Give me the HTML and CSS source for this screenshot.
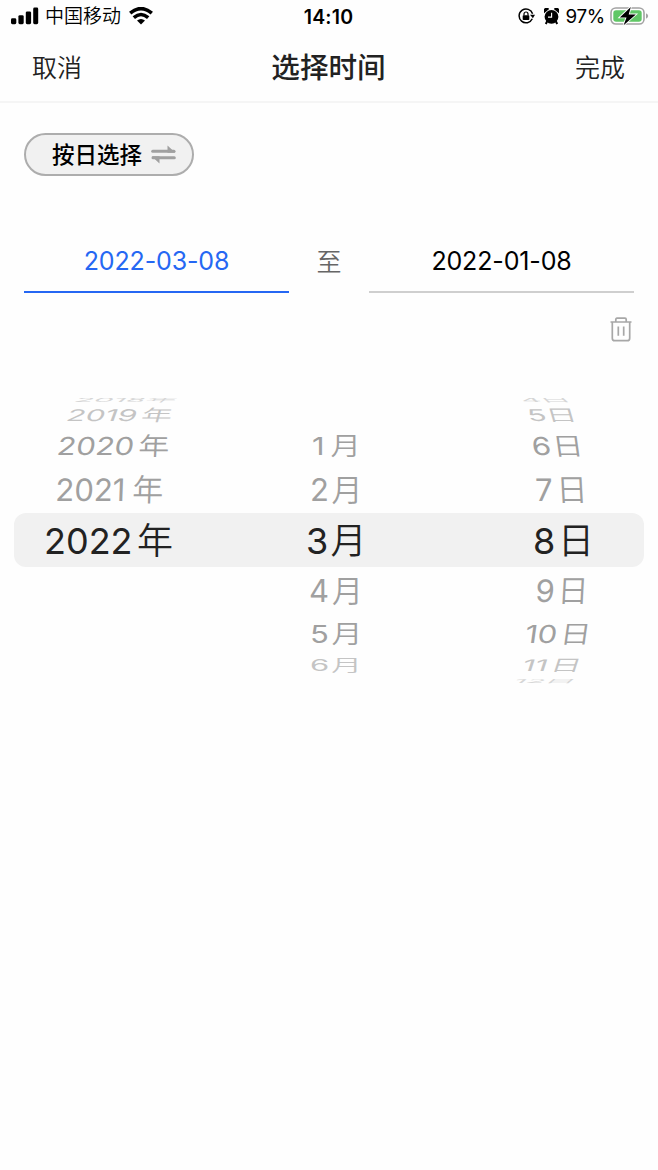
FILE: index.html
```html
<!DOCTYPE html>
<html lang="zh-CN">
<head>
<meta charset="utf-8">
<title>选择时间</title>
<link rel="stylesheet" href="styles.css">
</head>
<body>
<div class="status">
  <div class="status-left">
    <svg class="signal" width="28" height="18" viewBox="0 0 28 18"><rect x="0" y="11.3" width="5.3" height="5.9" rx="1.4"/><rect x="7.4" y="8.2" width="5.3" height="9" rx="1.4"/><rect x="14.8" y="4.4" width="5.3" height="12.8" rx="1.4"/><rect x="22.2" y="0.5" width="5" height="16.7" rx="1.4"/></svg>
    <span class="carrier">中国移动</span>
    <svg class="wifi" width="24" height="18" viewBox="0 0 24 18"><g fill="none" stroke="#000" stroke-width="3.6"><path d="M1.2 6.2Q12-3 22.8 6.2"/><path d="M4.8 10.6Q12 4.4 19.2 10.6"/></g><path d="M8 13.5Q12 10.4 16 13.5L12 17.5Z"/></svg>
  </div>
  <div class="clock">14:10</div>
  <div class="status-right">
    <svg class="lock" width="17" height="17" viewBox="0 0 17 17"><path d="M14.3 10.8A6.9 6.9 0 1 1 14.6 5.8" fill="none" stroke="#000" stroke-width="1.5"/><path d="M12 6.8h5l-2.1 3.5z"/><rect x="4.7" y="7.2" width="6.6" height="4.8" rx=".8"/><path d="M6 7.5V6a2 2 0 0 1 4 0v1.5" fill="none" stroke="#000" stroke-width="1.2"/></svg>
    <svg class="alarm" width="15" height="17" viewBox="0 0 15 17"><circle cx="7.5" cy="8.8" r="6.9"/><path d="M.1 5.2A3.1 3.1 0 0 1 5.2.9ZM14.9 5.2A3.1 3.1 0 0 0 9.8.9Z"/><path d="M3.3 13 1.8 16M11.7 13l1.5 3" stroke="#000" stroke-width="2"/><path d="M7.6 4.8v4.3H4" fill="none" stroke="#fff" stroke-width="1.1"/></svg>
    <span class="percent">97%</span>
    <svg class="battery" width="39" height="20" viewBox="0 0 39 20"><rect x="1" y="2" width="33" height="16" rx="4.8" fill="#fff" stroke="#a3a3a3" stroke-width="1.6"/><rect x="3.3" y="4.2" width="28.4" height="11.6" rx="2.8" fill="#60c766"/><path d="M36 7.2q2.2 1 2.2 2.8T36 12.8Z" fill="#a3a3a3"/><path d="M20.8 1 9.8 11.4h6.7L13.6 19.2 25.8 8.4H18.7Z" fill="#000" stroke="#fff" stroke-width="1.8" paint-order="stroke"/></svg>
  </div>
</div>
<header class="nav">
  <span class="nav-action">取消</span>
  <h1 class="nav-title">选择时间</h1>
  <span class="nav-action nav-done">完成</span>
</header>
<main>
  <button class="mode">
    <span>按日选择</span>
    <svg width="25" height="21" viewBox="0 0 25 21"><g fill="none" stroke="#a0a0a0" stroke-width="3" stroke-linecap="round"><path d="M1.7 7.2H23"/><path d="M2 13.8H23.3"/></g><path d="M16.5 1.4 24.3 8.7H16.5ZM8.5 19.6.7 12.3H8.5Z" fill="#a0a0a0"/></svg>
  </button>
  <section class="range">
    <div class="date date-active">2022-03-08</div>
    <div class="to">至</div>
    <div class="date">2022-01-08</div>
  </section>
  <div class="tools">
    <svg width="22" height="25" viewBox="0 0 22 25" fill="none" stroke="#a7a7a7" stroke-width="1.7"><path d="M.5 5H21.5M5.8 5V2.4Q5.8 1.2 7 1.2H15Q16.2 1.2 16.2 2.4V5M2.3 5V21.2Q2.3 23.7 4.8 23.7H17.2Q19.7 23.7 19.7 21.2V5M8.3 9.5V18.7M13.7 9.5V18.7"/></svg>
  </div>
  <section class="picker">
    <div class="selection"></div>
    <svg class="wheel" width="220" height="286">
      <g class="far"><text transform="translate(73 4) skewX(-50) scale(1 .19)">2018</text><text class="unit" transform="translate(144 4) skewX(-50) scale(1 .19)">年</text></g>
      <g class="faint"><text transform="translate(65 23) skewX(-20) scale(1 .52)">2019</text><text class="unit" transform="translate(140 22.5) skewX(-15) scale(1 .52)">年</text></g>
      <g><text transform="translate(56 57) skewX(-9) scale(1 .8)">2020</text><text class="unit" transform="translate(138 56.5) skewX(-3) scale(1 .8)">年</text></g>
      <g><text transform="translate(55 103) skewX(-2)">2021</text><text class="unit" transform="translate(132 103) skewX(-2)">年</text></g>
      <g class="current"><text x="44" y="156">2022</text><text class="unit" x="137" y="156">年</text></g>
    </svg>
    <svg class="wheel" width="219" height="286">
      <g><text transform="translate(92 57) scale(1 .8)">1</text><text class="unit" transform="translate(110.5 56.5) scale(.98 .8)">月</text></g>
      <g><text transform="translate(90 103)">2</text><text class="unit" transform="translate(111.5 102.5)">月</text></g>
      <g class="current"><text x="86" y="156">3</text><text class="unit" x="110.5" y="155.5">月</text></g>
      <g><text transform="translate(89 204)">4</text><text class="unit" transform="translate(112 204)">月</text></g>
      <g><text transform="translate(90 245) scale(1 .8)">5</text><text class="unit" transform="translate(111.5 245) scale(1 .8)">月</text></g>
      <g class="faint"><text transform="translate(90 273) scale(1 .51)">6</text><text class="unit" transform="translate(111 273) scale(1 .51)">月</text></g>
    </svg>
    <svg class="wheel" width="219" height="286">
      <g class="far"><text transform="translate(84 4) skewX(48) scale(1 .19)">4</text><text class="unit" transform="translate(103 4) skewX(48) scale(1 .19)">日</text></g>
      <g class="faint"><text transform="translate(90 23) skewX(16) scale(1 .52)">5</text><text class="unit" transform="translate(108.5 22.5) skewX(16) scale(1 .52)">日</text></g>
      <g><text transform="translate(94 57) skewX(8) scale(1 .8)">6</text><text class="unit" transform="translate(114.5 56.5) skewX(8) scale(1 .8)">日</text></g>
      <g><text transform="translate(97 103) skewX(3)">7</text><text class="unit" transform="translate(118 102.5) skewX(3)">日</text></g>
      <g class="current"><text x="94" y="156">8</text><text class="unit" x="119" y="155.5">日</text></g>
      <g><text transform="translate(96 204) skewX(-3)">9</text><text class="unit" transform="translate(118 204) skewX(-3)">日</text></g>
      <g><text transform="translate(85 245) skewX(-8) scale(1 .8)">10</text><text class="unit" transform="translate(120 245) skewX(-8) scale(1 .8)">日</text></g>
      <g class="faint"><text transform="translate(82 273) skewX(-18) scale(1 .51)">11</text><text class="unit" transform="translate(110 273) skewX(-18) scale(1 .51)">日</text></g>
      <g class="far"><text transform="translate(73 285) skewX(-50) scale(1 .17)">12</text><text class="unit" transform="translate(104 285) skewX(-50) scale(1 .17)">日</text></g>
    </svg>
  </section>
</main>
</body>
</html>
```
FILE: styles.css
```css
* { box-sizing: border-box; }
body {
  margin: 0;
  min-height: 1170px;
  background: #fefefe;
  color: #222;
  font-family: Inter, "Noto Sans CJK SC", sans-serif;
}
svg { display: block; flex: none; }
.status {
  display: grid;
  grid-template-columns: 1fr auto 1fr;
  align-items: center;
  height: 34px;
  padding: 0 9px 2px 11px;
  color: #000;
}
.status-left, .status-right { display: flex; align-items: center; height: 32px; }
.status-right { justify-content: flex-end; }
.carrier { margin: 2px 8px 0 6px; font-size: 19px; line-height: 32px; font-weight: 350; }
.clock { margin-left: -3px; padding-top: 1px; font-size: 19.5px; font-weight: 600; letter-spacing: .2px; }
.lock { margin-top: 1px; }
.alarm { margin-left: 9px; }
.percent { margin: 1px 5px 0 7px; font-size: 18.8px; letter-spacing: -.3px; }
.nav {
  display: grid;
  grid-template-columns: 1fr auto 1fr;
  align-items: center;
  height: 69px;
  padding: 0 33px 0 32px;
  border-bottom: 2px solid #f5f5f5;
}
.nav-action { font-size: 25px; line-height: 36px; font-weight: 350; }
.nav-done { text-align: right; }
.nav-title { margin: 0; font-size: 28.6px; font-weight: 500; line-height: 40px; }
.mode {
  display: flex;
  align-items: center;
  gap: 9px;
  width: 170px;
  height: 43px;
  margin: 30px 0 0 24px;
  padding: 1px 0 0 26px;
  border: 2px solid #adadad;
  border-radius: 22px;
  background: #f1f1f1;
  color: #000;
  font: 500 22.5px/30px Inter, "Noto Sans CJK SC", sans-serif;
}
.mode svg { margin-top: -2px; }
.range {
  display: grid;
  grid-template-columns: 265px 80px 265px;
  height: 63px;
  margin: 54px 24px 0;
  text-align: center;
}
.date {
  padding-top: 11px;
  border-bottom: 2px solid #cfcfcf;
  color: #000;
  font-size: 25px;
  line-height: 40px;
  letter-spacing: -.15px;
}
.date-active { border-color: #2567f3; color: #2567f3; }
.to { padding-top: 14px; color: #666; font-size: 25px; line-height: 36px; font-weight: 350; }
.tools { display: flex; justify-content: flex-end; padding: 24px 26px 0 0; }
.picker {
  display: grid;
  grid-template-columns: 220px 219px 219px;
  margin-top: 56px;
}
.selection {
  grid-area: 1 / 1 / 2 / 4;
  height: 54px;
  margin: 115px 14px 0;
  border-radius: 12px;
  background: #f1f1f1;
}
.wheel { grid-row: 1; overflow: hidden; fill: #a0a0a0; font-size: 31px; }
.wheel:nth-of-type(1) { grid-column: 1; }
.wheel:nth-of-type(2) { grid-column: 2; }
.wheel:nth-of-type(3) { grid-column: 3; }
.wheel .unit { font-weight: 350; }
.wheel .current { fill: #222; font-size: 36px; }
.wheel .faint { fill: #c4c4c4; }
.wheel .far { fill: #d6d6d6; }
```
